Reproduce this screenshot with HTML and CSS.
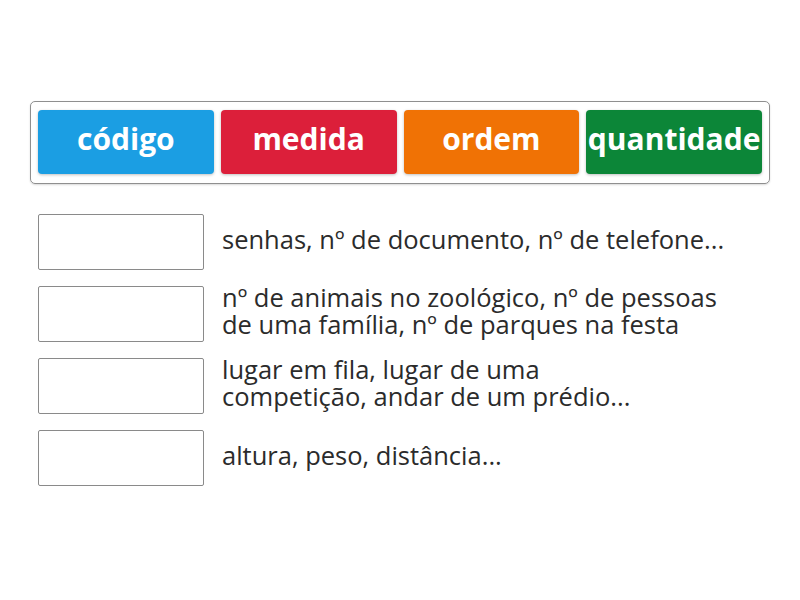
FILE: index.html
```html
<!DOCTYPE html>
<html lang="pt">
<head>
<meta charset="utf-8">
<link rel="stylesheet" href="styles.css">
</head>
<body>
<div class="bank">
  <div class="tile blue">código</div>
  <div class="tile red">medida</div>
  <div class="tile orange">ordem</div>
  <div class="tile green">quantidade</div>
</div>
<div class="rows">
  <div class="row"><div class="slot"></div><div class="desc">senhas, nº de documento, nº de telefone...</div></div>
  <div class="row"><div class="slot"></div><div class="desc">nº de animais no zoológico, nº de pessoas<br>de uma família, nº de parques na festa</div></div>
  <div class="row"><div class="slot"></div><div class="desc">lugar em fila, lugar de uma<br>competição, andar de um prédio...</div></div>
  <div class="row"><div class="slot"></div><div class="desc">altura, peso, distância...</div></div>
</div>
</body>
</html>
```
FILE: styles.css
```css
html, body {
  margin: 0;
  padding: 0;
  background: #fff;
  font-family: "Open Sans", "Noto Sans", sans-serif;
}
.bank {
  box-sizing: border-box;
  margin: 101px 0 0 30px;
  width: 740px;
  height: 83px;
  border: 1px solid #8f8f8f;
  border-radius: 5px;
  padding: 8px 7px;
  display: flex;
  gap: 7px;
  box-shadow: 0 1px 2px rgba(0,0,0,0.15);
}
.tile {
  box-sizing: border-box;
  flex: 1;
  height: 64px;
  padding-bottom: 7px;
  border-radius: 4px;
  color: #fff;
  font-weight: 700;
  font-size: 30px;
  display: flex;
  align-items: center;
  justify-content: center;
  box-shadow: 0 1px 3px rgba(0,0,0,0.25);
  white-space: nowrap;
}
.blue { background: #1b9ee3; }
.red { background: #dc1f3a; }
.orange { background: #f07205; }
.green { background: #0c8638; }
.rows {
  margin: 30px 0 0 38px;
  display: flex;
  flex-direction: column;
  gap: 16px;
}
.row {
  height: 56px;
  display: flex;
  align-items: center;
  gap: 18px;
}
.slot {
  box-sizing: border-box;
  width: 166px;
  height: 56px;
  border: 1px solid #8a8a8a;
  border-radius: 2px;
  background: #fff;
  flex: none;
}
.desc {
  font-size: 25.5px;
  line-height: 27px;
  padding-bottom: 6px;
  color: #2b2b2b;
}
```
